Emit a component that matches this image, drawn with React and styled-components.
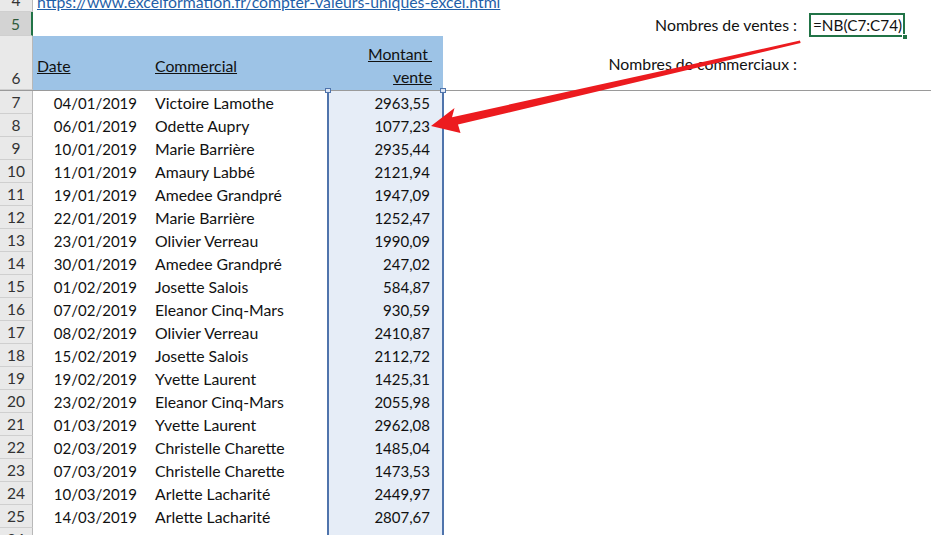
import styled, { createGlobalStyle } from 'styled-components';

const GlobalStyle = createGlobalStyle`
  html, body {
    margin: 0;
    padding: 0;
    background: #fff;
    overflow: hidden;
  }
  * {
    box-sizing: border-box;
  }
`;

const rows = [
  [7, '04/01/2019', 'Victoire Lamothe', '2963,55'],
  [8, '06/01/2019', 'Odette Aupry', '1077,23'],
  [9, '10/01/2019', 'Marie Barrière', '2935,44'],
  [10, '11/01/2019', 'Amaury Labbé', '2121,94'],
  [11, '19/01/2019', 'Amedee Grandpré', '1947,09'],
  [12, '22/01/2019', 'Marie Barrière', '1252,47'],
  [13, '23/01/2019', 'Olivier Verreau', '1990,09'],
  [14, '30/01/2019', 'Amedee Grandpré', '247,02'],
  [15, '01/02/2019', 'Josette Salois', '584,87'],
  [16, '07/02/2019', 'Eleanor Cinq-Mars', '930,59'],
  [17, '08/02/2019', 'Olivier Verreau', '2410,87'],
  [18, '15/02/2019', 'Josette Salois', '2112,72'],
  [19, '19/02/2019', 'Yvette Laurent', '1425,31'],
  [20, '23/02/2019', 'Eleanor Cinq-Mars', '2055,98'],
  [21, '01/03/2019', 'Yvette Laurent', '2962,08'],
  [22, '02/03/2019', 'Christelle Charette', '1485,04'],
  [23, '07/03/2019', 'Christelle Charette', '1473,53'],
  [24, '10/03/2019', 'Arlette Lacharité', '2449,97'],
  [25, '14/03/2019', 'Arlette Lacharité', '2807,67'],
  [26, '17/03/2019', 'Amaury Labbé', '1302,15'],
];

export default function App() {
  return (
    <>
      <GlobalStyle />
      <Sheet>
        <Row h={23}>
          <RowHead>4</RowHead>
          <LinkCell>https://www.excelformation.fr/compter-valeurs-uniques-excel.html</LinkCell>
        </Row>
        <Row h={24}>
          <RowHead selected>5</RowHead>
          <Cell />
          <Cell />
          <Cell />
          <LabelCell>Nombres de ventes :</LabelCell>
          <ActiveCell>
            =NB(C7:C74)
            <FillHandle />
          </ActiveCell>
        </Row>
        <Row h={55} frozen>
          <RowHead>6</RowHead>
          <HeaderCell>
            <u>Date</u>
          </HeaderCell>
          <HeaderCell pad="5px">
            <u>Commercial</u>
          </HeaderCell>
          <HeaderCell right>
            <Wrapped>
              <u>Montant&nbsp;</u>
              <u>vente</u>
            </Wrapped>
          </HeaderCell>
          <LabelCell>Nombres de commerciaux :</LabelCell>
        </Row>
        {rows.map(([n, date, name, amount], i) => (
          <Row key={n} h={23}>
            <RowHead>{n}</RowHead>
            <Cell right numeric pad="13px">{date}</Cell>
            <Cell pad="5px">{name}</Cell>
            <SelectedCell>
              {amount}
              {i === 0 && (
                <>
                  <Handle side="left" />
                  <Handle side="right" />
                </>
              )}
            </SelectedCell>
          </Row>
        ))}
        <Arrow viewBox="0 0 931 535" width="931" height="535">
          <polygon
            points="431,126 454.5,108 452,117.2 800,40.6 800.6,43 458,124.6 460.5,133"
            fill="#ec1b1f"
          />
        </Arrow>
      </Sheet>
    </>
  );
}

const Sheet = styled.div`
  position: relative;
  margin-top: -11px;
  width: 931px;
  font-family: Lato, 'Liberation Sans', sans-serif;
  font-size: 15.8px;
  color: #111;
`;

const Row = styled.div`
  display: grid;
  grid-template-columns: 33px 117px 178px 115px 366px 96px 1fr;
  height: ${(p) => p.h}px;
  border-bottom: ${(p) => (p.frozen ? '1px solid #9a9a9a' : 'none')};
`;

const RowHead = styled.div`
  display: flex;
  align-items: flex-end;
  justify-content: center;
  padding-bottom: 1px;
  background: ${(p) => (p.selected ? '#d3d3d3' : '#e9e9e9')};
  color: ${(p) => (p.selected ? '#2f5a3c' : '#333')};
  border-bottom: 1px solid #cfcfcf;
  border-right: ${(p) => (p.selected ? '2px solid #217346' : '1px solid #b8b8b8')};
  font-size: 15.5px;
  line-height: 20px;
`;

const Cell = styled.div`
  display: flex;
  align-items: center;
  justify-content: ${(p) => (p.right ? 'flex-end' : 'flex-start')};
  padding: 0 ${(p) => (p.right ? p.pad || '4px' : '0')} 0 ${(p) => (p.right ? '0' : p.pad || '4px')};
  font-size: ${(p) => (p.numeric ? '15px' : 'inherit')};
  white-space: nowrap;
  line-height: 20px;
`;

const LinkCell = styled.div`
  grid-column: 2 / span 5;
  display: flex;
  align-items: center;
  padding: 2px 0 0 4px;
  color: #1f5fa8;
  text-decoration: underline;
  white-space: nowrap;
`;

const LabelCell = styled.div`
  grid-column: 5;
  display: flex;
  align-items: center;
  justify-content: flex-end;
  padding: 1px 12px 0 0;
  white-space: nowrap;
`;

const ActiveCell = styled.div`
  position: relative;
  display: flex;
  align-items: center;
  padding-left: 2px;
  margin: 1px 0 -1px 0;
  border: 2px solid #217346;
  white-space: nowrap;
  font-size: 15.3px;
`;

const FillHandle = styled.span`
  position: absolute;
  right: -5px;
  bottom: -5px;
  width: 6px;
  height: 6px;
  background: #217346;
  border: 1px solid #fff;
`;

const HeaderCell = styled.div`
  display: flex;
  align-items: center;
  justify-content: ${(p) => (p.right ? 'flex-end' : 'flex-start')};
  padding: ${(p) => (p.right ? '0 11px 0 0' : `4px 0 0 ${p.pad || '4px'}`)};
  background: #9dc3e6;
  white-space: pre;
`;

const Wrapped = styled.div`
  display: flex;
  flex-direction: column;
  align-items: flex-end;
  line-height: 23px;
  margin-top: 4px;
`;

const SelectedCell = styled.div`
  position: relative;
  display: flex;
  align-items: center;
  justify-content: flex-end;
  padding-right: 12px;
  background: #e6edf7;
  border-left: 2px solid #4f74ac;
  border-right: 2px solid #4f74ac;
  margin-left: -1px;
  margin-right: -1px;
  font-size: 15px;
  line-height: 20px;
`;

const Handle = styled.span`
  position: absolute;
  top: -3px;
  ${(p) => (p.side === 'left' ? 'left: -4px;' : 'right: -4px;')}
  width: 6px;
  height: 5px;
  background: #dbe4f2;
  border: 1px solid #4f74ac;
`;

const Arrow = styled.svg`
  position: absolute;
  left: 0;
  top: 11px;
  pointer-events: none;
`;
